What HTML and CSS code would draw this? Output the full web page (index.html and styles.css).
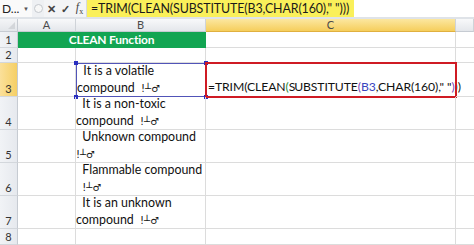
FILE: index.html
```html
<!DOCTYPE html>
<html>
<head>
  <title>CLEAN Function</title>
  <link rel="stylesheet" href="styles.css">
</head>
<body>

<!-- formula bar -->
<div class="fbar">
  <div class="namebox"><span>D...</span><span class="drop">&#9660;</span></div>
  <div class="grip"><span></span></div>
  <div class="btns">
    <span class="cancel">&#10005;</span>
    <span class="enter">&#10003;</span>
    <span class="fx"><i>f</i><sub>x</sub></span>
  </div>
  <div class="formula"><span class="hl">=TRIM(CLEAN(SUBSTITUTE(B3,CHAR(160)," ")))</span></div>
</div>

<!-- worksheet -->
<div class="sheet">
  <div class="corner"><span></span></div>
  <div class="colhead">A</div>
  <div class="colhead">B</div>
  <div class="colhead sel">C</div>
  <div class="colhead last"></div>

  <div class="rowhead">1</div>
  <div class="cell title">CLEAN Function</div>
  <div class="cell"></div>
  <div class="cell last"></div>

  <div class="rowhead">2</div>
  <div class="cell"></div>
  <div class="cell"></div>
  <div class="cell"></div>
  <div class="cell last"></div>

  <div class="rowhead sel">3</div>
  <div class="cell"></div>
  <div class="cell txt range"><div>  It is a volatile</div><div>compound  <span class="junk">!┴♂</span></div><span class="hdl tl"></span><span class="hdl tr"></span><span class="hdl bl"></span><span class="hdl br"></span></div>
  <div class="cell edit">=TRIM(CLEAN<span class="g">(</span>S<span class="caret"></span>UBSTITUTE<span class="p">(</span><span class="ref">B3</span>,CHAR(160),"&nbsp;"<span class="p">)</span><span class="g">)</span>)</div>
  <div class="cell last"></div>

  <div class="rowhead">4</div>
  <div class="cell"></div>
  <div class="cell txt"><div>  It is a non-toxic</div><div>compound  <span class="junk">!┴♂</span></div></div>
  <div class="cell"></div>
  <div class="cell last"></div>

  <div class="rowhead">5</div>
  <div class="cell"></div>
  <div class="cell txt"><div>  Unknown compound</div><div><span class="junk">!┴♂</span></div></div>
  <div class="cell"></div>
  <div class="cell last"></div>

  <div class="rowhead">6</div>
  <div class="cell"></div>
  <div class="cell txt"><div>  Flammable compound</div><div>  <span class="junk">!┴♂</span></div></div>
  <div class="cell"></div>
  <div class="cell last"></div>

  <div class="rowhead">7</div>
  <div class="cell"></div>
  <div class="cell txt"><div>  It is an unknown</div><div>compound  <span class="junk">!┴♂</span></div></div>
  <div class="cell"></div>
  <div class="cell last"></div>

  <div class="rowhead">8</div>
  <div class="cell"></div>
  <div class="cell"></div>
  <div class="cell"></div>
  <div class="cell last"></div>
</div>

</body>
</html>
```

FILE: styles.css
```css
* {
  box-sizing: border-box;
}

html, body {
  margin: 0;
  overflow: hidden;
}

body {
  width: 474px;
  height: 245px;
  background: #ffffff;
  font-family: Lato, "Open Sans", sans-serif;
  color: #1a1a1a;
}

/* formula bar */
.fbar {
  display: flex;
  height: 19px;
  background: #ffffff;
  border-bottom: 2px solid #dfe3e8;
  font-size: 12px;
}

.namebox {
  width: 32px;
  display: flex;
  align-items: center;
  justify-content: space-between;
  padding: 0 3px 0 2px;
  background: #fafafa;
  color: #222;
}

.namebox .drop {
  font-size: 6px;
  color: #555;
}

.grip {
  width: 12px;
  display: flex;
  align-items: center;
  justify-content: center;
  background: #eef0f3;
}

.grip span {
  width: 9px;
  height: 9px;
  border-radius: 50%;
  border: 1px solid #c4c8cd;
  background: #f7f7f7;
}

.btns {
  width: 42px;
  display: flex;
  align-items: center;
  justify-content: space-around;
  background: #f3f4f6;
  color: #444;
  font-size: 11px;
  font-weight: bold;
}

.btns .fx {
  font-family: "Liberation Serif", serif;
  font-weight: normal;
  font-size: 12px;
}

.btns .fx sub {
  font-size: 8px;
}

.formula {
  flex: 1;
  display: flex;
  align-items: center;
  border-left: 1px solid #d6d9de;
}

.formula .hl {
  background: #faf05a;
  height: 100%;
  display: flex;
  align-items: center;
  padding: 0 5px 0 4px;
  font-size: 12.4px;
  letter-spacing: -0.1px;
}

/* worksheet grid */
.sheet {
  display: grid;
  height: 226px;
  grid-template-columns: 18px 58px 130px 250px 1fr;
  grid-template-rows: 13px 16px 15px 34px 33px 33px 33px 33px 16px;
  font-size: 12.4px;
}

.corner {
  background: linear-gradient(#f4f5f7, #e3e6ea);
  border-right: 1px solid #c6cbd2;
  border-bottom: 1px solid #c6cbd2;
  position: relative;
}

.corner span {
  position: absolute;
  right: 2px;
  bottom: 2px;
  border-left: 7px solid transparent;
  border-bottom: 7px solid #d3d6da;
}

.colhead {
  background: linear-gradient(#f8f9fa, #e4e7eb);
  border-right: 1px solid #cfd3d8;
  border-bottom: 1px solid #c6cbd2;
  text-align: center;
  font-size: 11px;
  line-height: 12px;
  color: #4a4a4a;
}

.colhead.sel {
  background: linear-gradient(#fbe7a0, #f5ce5c);
  border-bottom-color: #e0b040;
}

.rowhead {
  background: linear-gradient(90deg, #f1f3f6, #e6e9ee);
  border-right: 1px solid #c6cbd2;
  border-bottom: 1px solid #d3d7dc;
  display: flex;
  align-items: flex-end;
  justify-content: center;
  font-size: 11px;
  line-height: 14px;
  color: #333;
}

.rowhead.sel {
  background: linear-gradient(90deg, #fbe09a, #f5cf65);
}

.cell {
  border-right: 1px solid #dcdcdc;
  border-bottom: 1px solid #dcdcdc;
  position: relative;
}

.cell.last {
  border-right: none;
}

.cell.title {
  grid-column: span 2;
  background: #12a552;
  color: #ffffff;
  font-weight: bold;
  font-size: 12px;
  letter-spacing: -0.2px;
  text-align: center;
  line-height: 15px;
  border-color: #12a552;
}

.cell.txt {
  display: flex;
  flex-direction: column;
  justify-content: center;
  padding-left: 0;
  white-space: pre;
  line-height: 16.5px;
  color: #111;
}

.junk {
  font-family: "DejaVu Sans", sans-serif;
  font-size: 10px;
}

.cell.range {
  border: 1px solid #5154b8;
}

.hdl {
  position: absolute;
  width: 4px;
  height: 4px;
  background: #2a2fc0;
}

.hdl.tl { left: -3px; top: -3px; }
.hdl.tr { right: -3px; top: -3px; }
.hdl.bl { left: -3px; bottom: -3px; }
.hdl.br { right: -3px; bottom: -3px; }

.cell.edit {
  outline: 2px solid #cf1b24;
  outline-offset: -1px;
  display: flex;
  align-items: flex-end;
  padding: 0 0 2px 2px;
  white-space: pre;
  font-size: 12.2px;
  letter-spacing: -0.1px;
  color: #111;
}

.edit .g {
  color: #2e8b3a;
}

.edit .p {
  color: #7a3fb5;
}

.edit .ref {
  color: #3a45c0;
}

.caret {
  display: inline-block;
  width: 1px;
  height: 14px;
  margin: 0 -1px 2px 0;
  background: #111;
}
```
